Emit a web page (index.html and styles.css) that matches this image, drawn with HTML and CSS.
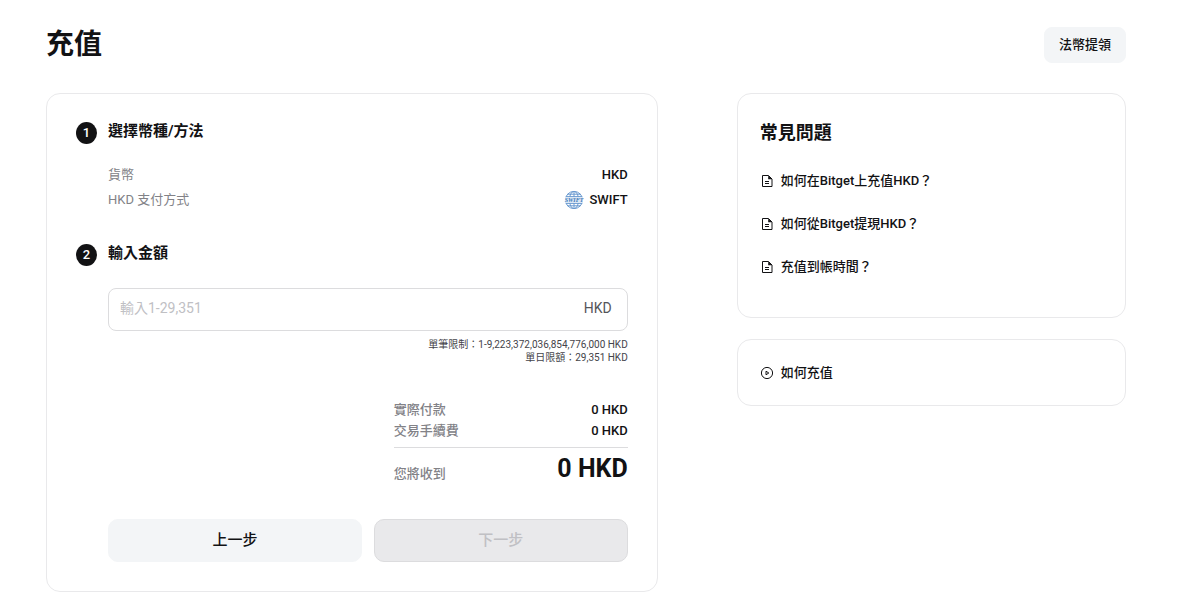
FILE: index.html
```
<!DOCTYPE html>
<html lang="zh-Hant">
<head>
  <meta charset="UTF-8" />
  <meta name="viewport" content="width=device-width, initial-scale=1.0"/>
  <title>充值</title>
  <link rel="stylesheet" href="styles.css">
</head>
<body>
  <!-- Shared icons -->
  <svg class="icon-defs" width="0" height="0" aria-hidden="true">
    <symbol id="icon-doc" viewBox="0 0 14 14">
      <path d="M8.5 1.5H2.5v11h9.5V5L8.5 1.5z" fill="none" stroke="currentColor" stroke-width="1" stroke-linejoin="round"/>
      <path d="M8.2 1.4v3.8h3.8z" fill="currentColor"/>
      <path d="M5 7.5h4M5 9.5h4" fill="none" stroke="currentColor" stroke-width="1"/>
    </symbol>
  </svg>

  <div class="page">
    <header class="page-header">
      <h1>充值</h1>
      <button type="button" class="btn btn-small">法幣提領</button>
    </header>

    <div class="layout">
      <!-- Deposit form -->
      <form class="card deposit">
        <section class="step">
          <span class="step-number">1</span>
          <div class="step-body">
            <h2>選擇幣種/方法</h2>
            <dl class="details">
              <div class="row">
                <dt>貨幣</dt>
                <dd>HKD</dd>
              </div>
              <div class="row">
                <dt>HKD 支付方式</dt>
                <dd>
                  <svg class="swift-icon" viewBox="0 0 20 20" aria-hidden="true">
                    <g fill="none" stroke="#6a9ad0" stroke-width="1">
                      <circle cx="10" cy="10" r="8.6"/>
                      <ellipse cx="10" cy="10" rx="4.6" ry="8.6"/>
                      <path d="M10 1.4v17.2M3.6 4.2h12.8M2 6.6h16M2 13.4h16M3.6 15.8h12.8"/>
                    </g>
                    <rect x="1" y="7" width="18" height="6" fill="#dbe7f4"/>
                    <text x="10" y="12.4" class="swift-text">SWIFT</text>
                  </svg>
                  SWIFT
                </dd>
              </div>
            </dl>
          </div>
        </section>

        <section class="step">
          <span class="step-number">2</span>
          <div class="step-body">
            <h2><label for="amount">輸入金額</label></h2>
            <div class="amount-box">
              <input type="text" id="amount" placeholder="輸入1-29,351">
              <span class="unit">HKD</span>
            </div>
            <p class="limits">單筆限制：1-9,223,372,036,854,776,000 HKD<br>單日限額：29,351 HKD</p>

            <dl class="summary">
              <div class="row">
                <dt>實際付款</dt>
                <dd>0 HKD</dd>
              </div>
              <div class="row">
                <dt>交易手續費</dt>
                <dd>0 HKD</dd>
              </div>
              <div class="row total">
                <dt>您將收到</dt>
                <dd>0 HKD</dd>
              </div>
            </dl>

            <div class="actions">
              <button type="button" class="btn">上一步</button>
              <button type="submit" class="btn" disabled>下一步</button>
            </div>
          </div>
        </section>
      </form>

      <!-- Help -->
      <aside class="help">
        <section class="card faq">
          <h2>常見問題</h2>
          <ul>
            <li><a href="#" class="help-link"><svg class="icon"><use href="#icon-doc"/></svg>如何在Bitget上充值HKD？</a></li>
            <li><a href="#" class="help-link"><svg class="icon"><use href="#icon-doc"/></svg>如何從Bitget提現HKD？</a></li>
            <li><a href="#" class="help-link"><svg class="icon"><use href="#icon-doc"/></svg>充值到帳時間？</a></li>
          </ul>
        </section>
        <section class="card guide">
          <a href="#" class="help-link">
            <svg class="icon" viewBox="0 0 14 14">
              <circle cx="7" cy="7" r="5.6" fill="none" stroke="currentColor" stroke-width="1"/>
              <path d="M6 5.2v3.6l2.8-1.8z" fill="none" stroke="currentColor" stroke-width="1" stroke-linejoin="round"/>
            </svg>如何充值</a>
        </section>
      </aside>
    </div>
  </div>
</body>
</html>
```
FILE: styles.css
```
/* Base */
* {
  box-sizing: border-box;
}
body {
  margin: 0;
  background-color: #fff;
  color: #121214;
  font-family: Roboto, "Noto Sans CJK TC", sans-serif;
  font-size: 13px;
}
h1, h2, p, ul, dl, dd {
  margin: 0;
  padding: 0;
}
ul {
  list-style: none;
}
input, button {
  font-family: inherit;
}
.icon-defs {
  position: absolute;
}

/* Page layout */
.page {
  padding: 27px 64px 0 46px;
}
.page-header {
  display: flex;
  justify-content: space-between;
  align-items: center;
  height: 36px;
  margin-bottom: 30px;
}
.page-header h1 {
  font-size: 28px;
  line-height: 36px;
}
.layout {
  display: grid;
  grid-template-columns: 11fr 7fr;
  column-gap: 79px;
  align-items: start;
}
.card {
  border: 1px solid #e9e9eb;
  border-radius: 14px;
}

/* Buttons */
.btn {
  flex: 1;
  height: 43px;
  padding: 0 14px 4px;
  border: 1px solid #f3f5f7;
  border-radius: 10px;
  background-color: #f3f5f7;
  color: #121214;
  font-size: 15px;
  font-weight: 500;
  cursor: pointer;
}
.btn:disabled {
  border-color: #dcdcde;
  background-color: #e9e9eb;
  color: #c0c0c4;
  cursor: default;
}
.btn-small {
  flex: none;
  height: 36px;
  border-radius: 8px;
  font-size: 13px;
}

/* Deposit steps */
.deposit {
  padding: 27px 29px 29px;
}
.step {
  display: flex;
  gap: 11px;
}
.step + .step {
  margin-top: 31px;
}
.step-number {
  width: 21px;
  height: 22px;
  margin-top: 1px;
  border-radius: 50%;
  background-color: #121214;
  color: #fff;
  font-weight: 500;
  line-height: 22px;
  text-align: center;
}
.step-body {
  flex: 1;
}
.step-body h2 {
  font-size: 15px;
  font-weight: 700;
  line-height: 20px;
}
.row {
  display: flex;
  justify-content: space-between;
  align-items: center;
}
.row dt {
  color: #828287;
}
.row dd {
  display: flex;
  align-items: center;
  gap: 6px;
  font-weight: 500;
}
.details {
  margin-top: 21px;
  line-height: 25px;
}
.swift-icon {
  width: 20px;
  height: 20px;
}
.swift-text {
  fill: #3c78b8;
  font: italic bold 6px "Liberation Serif", serif;
  text-anchor: middle;
}

/* Amount */
.amount-box {
  display: flex;
  align-items: center;
  height: 43px;
  margin-top: 25px;
  padding: 0 15px 3px 11px;
  border: 1px solid #dcdcde;
  border-radius: 8px;
}
.amount-box input {
  flex: 1;
  min-width: 0;
  padding: 0;
  border: 0;
  outline: none;
  background: none;
  font-size: 14px;
}
.amount-box input::placeholder {
  color: #c0c0c4;
}
.unit {
  color: #55555a;
  font-size: 14px;
}
.limits {
  margin-top: 7px;
  color: #44444a;
  font-size: 10px;
  line-height: 13px;
  text-align: right;
}

/* Summary */
.summary {
  width: 45%;
  margin: 35px 0 0 auto;
  line-height: 21px;
}
.summary dt {
  font-weight: 500;
}
.total {
  margin-top: 6px;
  padding-top: 5px;
  border-top: 1px solid #dcdcde;
}
.total dt {
  padding-top: 10px;
}
.total dd {
  font-size: 25px;
  font-weight: 700;
  line-height: 31px;
}
.actions {
  display: flex;
  gap: 12px;
  margin-top: 35px;
}

/* Help cards */
.help {
  display: grid;
  gap: 21px;
}
.faq {
  padding: 23px 22px 40px;
}
.faq h2 {
  margin-bottom: 21px;
  font-size: 18px;
  line-height: 32px;
}
.faq ul {
  display: grid;
  gap: 22px;
}
.guide {
  padding: 22px;
}
.help-link {
  display: flex;
  align-items: center;
  gap: 7px;
  color: #121214;
  font-weight: 500;
  line-height: 21px;
  text-decoration: none;
}
.icon {
  width: 14px;
  height: 14px;
}
```
